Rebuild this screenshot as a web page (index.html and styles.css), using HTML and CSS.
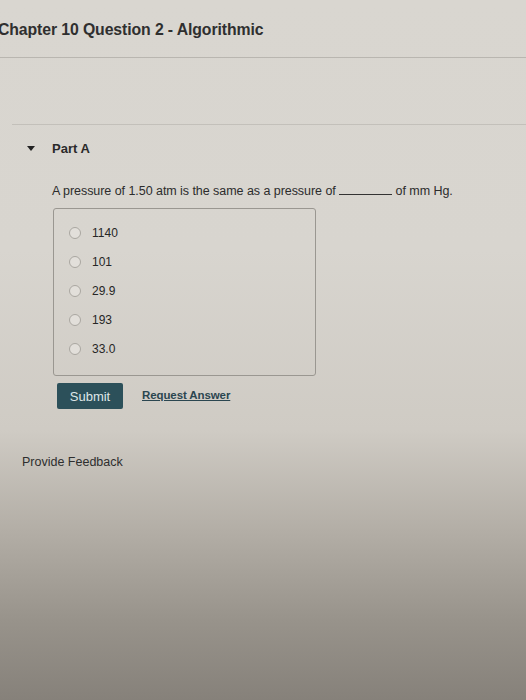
FILE: index.html
```html
<!DOCTYPE html>
<html>
<head>
<meta charset="utf-8">
<link rel="stylesheet" href="styles.css">
</head>
<body>
<div class="page">
  <header class="header">
    <h1 class="title">Chapter 10 Question 2 - Algorithmic</h1>
  </header>
  <div class="spacer"></div>
  <section class="part">
    <div class="part-head">
      <span class="caret"></span>
      <h2 class="part-title">Part A</h2>
    </div>
    <div class="part-body">
      <p class="question">A pressure of 1.50 atm is the same as a pressure of <span class="blank"></span> of mm Hg.</p>
      <div class="choices">
        <label class="choice"><span class="radio"></span><span class="opt">1140</span></label>
        <label class="choice"><span class="radio"></span><span class="opt">101</span></label>
        <label class="choice"><span class="radio"></span><span class="opt">29.9</span></label>
        <label class="choice"><span class="radio"></span><span class="opt">193</span></label>
        <label class="choice"><span class="radio"></span><span class="opt">33.0</span></label>
      </div>
      <div class="actions">
        <button class="submit">Submit</button>
        <a class="request">Request Answer</a>
      </div>
    </div>
  </section>
  <div class="feedback">Provide Feedback</div>
</div>
</body>
</html>
```
FILE: styles.css
```css
html, body {
  margin: 0;
  padding: 0;
  height: 100%;
}
body {
  font-family: "Liberation Sans", Arial, sans-serif;
  color: #333;
  background: linear-gradient(to bottom, #d9d6d0 0px, #d8d5cf 250px, #cfcbc4 430px, #b3aea6 530px, #98938b 620px, #86817a 700px);
  overflow: hidden;
}
.page {
  width: 526px;
  height: 700px;
}
.header {
  height: 57px;
  border-bottom: 1px solid #b9b6b0;
  display: flex;
  align-items: flex-start;
}
.title {
  margin: 21px 0 0 -2px;
  font-size: 15.8px;
  font-weight: bold;
  color: #2f2f2f;
  letter-spacing: -0.1px;
  line-height: 18px;
}
.spacer {
  height: 66px;
  margin-left: 12px;
  border-bottom: 1px solid #c3c0ba;
}
.part {
  padding-top: 14px;
}
.part-head {
  display: flex;
  align-items: center;
  height: 18px;
}
.caret {
  width: 0;
  height: 0;
  margin-left: 27px;
  border-left: 4.5px solid transparent;
  border-right: 4.5px solid transparent;
  border-top: 5px solid #222;
}
.part-title {
  margin: 0 0 0 17px;
  font-size: 13px;
  font-weight: bold;
  color: #2a2a2a;
}
.part-body {
  padding-left: 53px;
}
.question {
  margin: 27px 0 0 -1px;
  font-size: 12.5px;
  line-height: 14px;
  color: #2c2c2c;
  letter-spacing: -0.05px;
}
.blank {
  display: inline-block;
  width: 53px;
  border-bottom: 1px solid #333;
  vertical-align: baseline;
}
.choices {
  width: 261px;
  margin-top: 10px;
  border: 1px solid #9a9791;
  border-radius: 3px;
  padding: 17px 0 19px 0;
  display: flex;
  flex-direction: column;
  gap: 15px;
}
.choice {
  display: flex;
  align-items: center;
  height: 14px;
  padding-left: 15px;
}
.radio {
  width: 12px;
  height: 12px;
  border: 1px solid #aaa7a1;
  border-radius: 50%;
  background: #e2dfda;
  box-sizing: border-box;
  flex: none;
}
.opt {
  margin-left: 11px;
  font-size: 12px;
  color: #262626;
}
.actions {
  display: flex;
  align-items: center;
  margin-top: 7px;
  padding-left: 4px;
}
.submit {
  width: 66px;
  height: 26px;
  border: none;
  border-radius: 2px;
  background: #2c505a;
  color: #dfe6e8;
  font-family: "Liberation Sans", Arial, sans-serif;
  font-size: 13px;
  padding: 0;
}
.request {
  margin-left: 19px;
  margin-top: -2px;
  font-size: 11.5px;
  font-weight: bold;
  color: #2b4650;
  text-decoration: underline;
  letter-spacing: -0.1px;
}
.feedback {
  margin: 46px 0 0 22px;
  font-size: 12.5px;
  color: #2e2e2e;
}
```
